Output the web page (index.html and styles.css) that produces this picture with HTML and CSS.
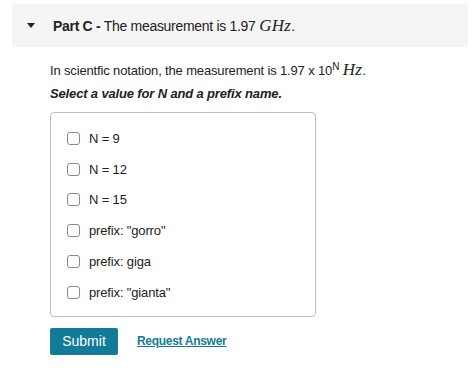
FILE: index.html
```html
<!DOCTYPE html>
<html lang="en">
<head>
  <meta charset="UTF-8">
  <title>Part C</title>
  <link rel="stylesheet" href="styles.css">
</head>
<body>
  <div class="part-header">
    <span class="caret"></span>
    <h2><strong>Part C -</strong> The measurement is 1.97 <span class="math">GHz</span>.</h2>
  </div>

  <div class="part-body">
    <p class="prompt">In scientfic notation, the measurement is 1.97 x 10<sup>N</sup> <span class="math">Hz</span>.</p>
    <p class="instruct">Select a value for N and a prefix name.</p>

    <div class="choices">
      <label class="choice"><input type="checkbox"><span>N = 9</span></label>
      <label class="choice"><input type="checkbox"><span>N = 12</span></label>
      <label class="choice"><input type="checkbox"><span>N = 15</span></label>
      <label class="choice"><input type="checkbox"><span>prefix: "gorro"</span></label>
      <label class="choice"><input type="checkbox"><span>prefix: giga</span></label>
      <label class="choice"><input type="checkbox"><span>prefix: "gianta"</span></label>
    </div>

    <div class="actions">
      <button class="button">Submit</button>
      <a href="#" class="link">Request Answer</a>
    </div>
  </div>
</body>
</html>
```

FILE: styles.css
```css
:root {
  --teal: #127b98;
  --text: #222;
  --header-bg: #f5f5f5;
}

body {
  font-family: "Liberation Sans", Arial, sans-serif;
  color: var(--text);
  margin: 0;
  padding: 4px 6px 0 12px;
  background: #fff;
  letter-spacing: -0.15px;
}

/* header */
.part-header {
  display: flex;
  align-items: center;
  height: 43px;
  background: var(--header-bg);
  padding-left: 15px;
}

.caret {
  width: 0;
  height: 0;
  border-left: 4px solid transparent;
  border-right: 4px solid transparent;
  border-top: 5px solid #222;
  margin-right: 18px;
}

.part-header h2 {
  font-size: 14px;
  font-weight: normal;
  letter-spacing: -0.3px;
  margin: 0;
}

.math {
  font-family: "Liberation Serif", "Times New Roman", serif;
  font-style: italic;
  font-size: 17px;
  letter-spacing: 0.3px;
}

/* body */
.part-body {
  padding-left: 38px;
}

.prompt {
  font-size: 13px;
  margin: 13px 0 0;
}

.prompt sup {
  font-size: 10px;
  vertical-align: 5px;
  line-height: 0;
}

.instruct {
  font-size: 13px;
  font-weight: bold;
  font-style: italic;
  margin: 6px 0 0;
}

.choices {
  box-sizing: border-box;
  width: 266px;
  margin-top: 11px;
  border: 1px solid #bdbdbd;
  border-radius: 4px;
  padding: 10px 0 8px 16px;
}

.choice {
  display: flex;
  align-items: center;
  height: 30.8px;
  font-size: 13px;
}

.choice input {
  appearance: none;
  width: 13px;
  height: 13px;
  margin: 0 9px 0 0;
  border: 1px solid #8a8a8a;
  border-radius: 3px;
  background: #fff;
}

.actions {
  display: flex;
  align-items: center;
  margin-top: 11px;
}

.button {
  background-color: var(--teal);
  color: #fff;
  border: none;
  border-radius: 2px;
  width: 68px;
  height: 27px;
  font-family: inherit;
  font-size: 14px;
  padding: 0;
}

.link {
  color: var(--teal);
  font-size: 12px;
  font-weight: bold;
  letter-spacing: -0.3px;
  margin-left: 19px;
  text-decoration: underline;
}
```
